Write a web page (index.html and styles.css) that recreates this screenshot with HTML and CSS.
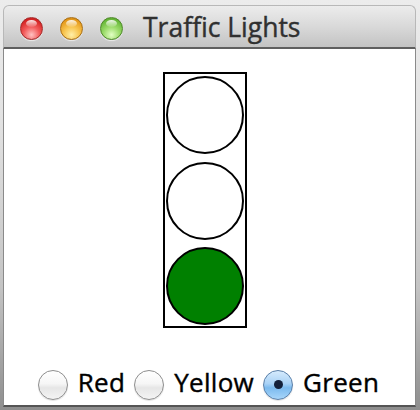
FILE: index.html
```html
<!DOCTYPE html>
<html>
<head>
<meta charset="utf-8">
<link rel="stylesheet" href="styles.css">
</head>
<body>
<div class="window">
  <div class="titlebar">
    <div class="controls">
      <span class="btn btn-close"></span>
      <span class="btn btn-min"></span>
      <span class="btn btn-zoom"></span>
    </div>
    <span class="title">Traffic Lights</span>
  </div>
  <div class="content">
    <div class="light-box">
      <div class="lamp"></div>
      <div class="lamp"></div>
      <div class="lamp lamp-green"></div>
    </div>
    <div class="radios">
      <span class="radio"></span><span class="label">Red</span>
      <span class="radio"></span><span class="label">Yellow</span>
      <span class="radio radio-on"><span class="dot"></span></span><span class="label">Green</span>
    </div>
  </div>
</div>
</body>
</html>
```
FILE: styles.css
```css
html, body {
  margin: 0;
  padding: 0;
}
body {
  width: 420px;
  height: 410px;
  overflow: hidden;
  background: linear-gradient(#ececec 0%, #e2e2e2 30%, #c4c4c4 70%, #8e8e8e 100%);
  font-family: "Open Sans", "DejaVu Sans", sans-serif;
}
.window {
  margin: 5px 0 0 3px;
  width: 413px;
  display: flex;
  flex-direction: column;
}
.titlebar {
  height: 41px;
  border: 1px solid #b8b8b8;
  border-bottom: 2px solid #5f5f5f;
  border-radius: 6px 6px 0 0;
  background: linear-gradient(#ececec, #d9d9d9 50%, #c3c3c3);
  display: flex;
  align-items: center;
  padding-left: 16px;
}
.controls {
  display: flex;
  gap: 17px;
  margin-top: 3px;
}
.btn {
  width: 23px;
  height: 23px;
  border-radius: 50%;
  box-sizing: border-box;
  position: relative;
  box-shadow: 0 1px 1px rgba(255,255,255,0.6);
}
.btn::after {
  content: "";
  position: absolute;
  left: 5px;
  top: 2px;
  width: 11px;
  height: 7px;
  border-radius: 50%;
  background: linear-gradient(rgba(255,255,255,0.9), rgba(255,255,255,0.1));
}
.btn-close {
  border: 1px solid #a52b2b;
  background: radial-gradient(circle at 50% 80%, #ffc2c2 0%, #f25c5c 40%, #d62525 75%, #b81717 100%);
}
.btn-min {
  border: 1px solid #a96f15;
  background: radial-gradient(circle at 50% 80%, #ffefa8 0%, #f8c550 40%, #e59a1c 75%, #c47c0f 100%);
}
.btn-zoom {
  border: 1px solid #4f8a2a;
  background: radial-gradient(circle at 50% 80%, #e2ffc4 0%, #9ddc6c 40%, #69b93a 75%, #4f9a25 100%);
}
.title {
  margin-left: 20px;
  font-family: "Open Sans", "DejaVu Sans", sans-serif;
  font-size: 26.5px;
  color: #303030;
  line-height: 41px;
  padding-top: 2px;
  -webkit-text-stroke: 0.4px #303030;
}
.content {
  height: 356px;
  background: #ffffff;
  border-left: 1px solid #8a8a8a;
  border-right: 1px solid #8a8a8a;
  border-bottom: 2px solid #555555;
  display: flex;
  flex-direction: column;
  align-items: center;
}
.light-box {
  margin-top: 23px;
  margin-right: 9px;
  width: 84px;
  height: 256px;
  box-sizing: border-box;
  border: 2px solid #000;
  padding: 2px 1px 1px 1px;
  display: flex;
  flex-direction: column;
  justify-content: space-between;
  align-items: center;
}
.lamp {
  width: 78px;
  height: 78px;
  box-sizing: border-box;
  border-radius: 50%;
  border: 2px solid #000;
  background: #fff;
}
.lamp-green {
  background: #008000;
}
.radios {
  margin-top: 42px;
  margin-right: 2px;
  height: 29px;
  display: flex;
  align-items: center;
}
.radio {
  width: 30px;
  height: 30px;
  box-sizing: border-box;
  border-radius: 50%;
  border: 1px solid #8e8e8e;
  background: linear-gradient(#ffffff 0%, #f6f6f6 45%, #e6e6e6 60%, #f4f4f4 100%);
  box-shadow: 0 1px 1px rgba(0,0,0,0.12);
  display: flex;
  align-items: center;
  justify-content: center;
  margin-right: 10px;
}
.radio-on {
  border-color: #5a7fa8;
  background: linear-gradient(#d6ebfd 0%, #a9d2f6 45%, #7bbaee 60%, #a8d6fa 100%);
}
.dot {
  width: 9px;
  height: 9px;
  border-radius: 50%;
  background: #13203a;
}
.label {
  font-size: 26px;
  line-height: 29px;
  letter-spacing: 0.3px;
  color: #000;
  padding-bottom: 5px;
  margin-right: 9px;
  -webkit-text-stroke: 0.4px #000;
}
.label:last-child {
  margin-right: 0;
}
```
